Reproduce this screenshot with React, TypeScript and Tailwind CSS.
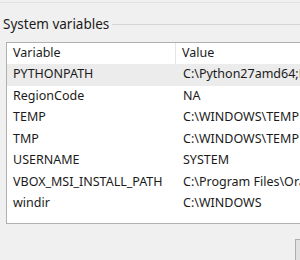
import React from "react";

const rows: [string, string][] = [
  ["PYTHONPATH", "C:\\Python27amd64;D:\\tools"],
  ["RegionCode", "NA"],
  ["TEMP", "C:\\WINDOWS\\TEMP"],
  ["TMP", "C:\\WINDOWS\\TEMP"],
  ["USERNAME", "SYSTEM"],
  ["VBOX_MSI_INSTALL_PATH", "C:\\Program Files\\Oracle\\VirtualBox\\"],
  ["windir", "C:\\WINDOWS"],
];

export default function App() {
  return (
    <div
      className="w-[300px] h-[260px] overflow-hidden bg-[#f0f0f0] text-[#1b1b1b] text-[12.5px] flex flex-col"
      style={{ fontFamily: '"Noto Sans", "Open Sans", sans-serif' }}
    >
      <div className="h-[2px] shrink-0" />
      <div className="h-px shrink-0 bg-[#e2e2e2]" />
      <div className="flex items-center h-[39px] shrink-0 pl-[3px] pt-[4px]">
        <span className="whitespace-nowrap leading-none text-[13.5px]">System variables</span>
        <div className="flex-1 h-px bg-[#d5d5d5] ml-[3px]" />
      </div>
      <div className="ml-[6px] w-[300px] h-[182px] shrink-0 bg-white border-l border-t border-b border-[#b0b0b0] flex flex-col overflow-hidden">
        <div className="flex h-[21px] shrink-0 items-center">
          <div className="w-[169px] h-full flex items-center pl-[6px] border-r border-[#e5e5e5]">Variable</div>
          <div className="pl-[6px]">Value</div>
        </div>
        {rows.map(([k, v], i) => (
          <div
            key={k}
            className={`flex h-[21.5px] shrink-0 items-center whitespace-nowrap ${i === 0 ? "bg-[#ececec]" : ""}`}
          >
            <div className="w-[170px] shrink-0 pl-[6px] overflow-visible">{k}</div>
            <div className="pl-[6px]">{v}</div>
          </div>
        ))}
      </div>
      <div className="flex justify-end pt-[15px]">
        <div className="w-[5px] h-[30px] bg-[#e1e1e1] border-l border-t border-[#adadad]" />
      </div>
    </div>
  );
}
